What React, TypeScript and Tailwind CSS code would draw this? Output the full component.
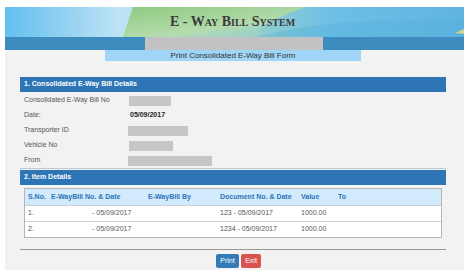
const rows = [
  { sno: '1.', ewb: '- 05/09/2017', by: '', doc: '123 - 05/09/2017', value: '1000.00', to: '' },
  { sno: '2.', ewb: '- 05/09/2017', by: '', doc: '1234 - 05/09/2017', value: '1000.00', to: '' },
]

function Banner() {
  return (
    <div className="relative h-[30px] overflow-hidden">
      <svg className="absolute inset-0 h-full w-full" viewBox="0 0 459 30" preserveAspectRatio="none">
        <defs>
          <linearGradient id="sky" x1="0" x2="1" y1="0" y2="0">
            <stop offset="0" stopColor="#62bfee" />
            <stop offset="0.25" stopColor="#bfe3f5" />
            <stop offset="0.5" stopColor="#9fd3c0" />
            <stop offset="0.7" stopColor="#6fc0e6" />
            <stop offset="1" stopColor="#5fb4df" />
          </linearGradient>
          <linearGradient id="green" x1="0" x2="1" y1="0" y2="1">
            <stop offset="0" stopColor="#86c66c" />
            <stop offset="0.6" stopColor="#b6dca6" />
            <stop offset="1" stopColor="#8ccbe8" stopOpacity="0.2" />
          </linearGradient>
        </defs>
        <rect width="459" height="30" fill="url(#sky)" />
        <path d="M118 30 L128 0 L300 0 C270 12 240 22 260 30 Z" fill="url(#green)" opacity="0.85" />
        <path d="M70 0 L77 30" stroke="#a7cfe4" strokeWidth="0.8" />
        <path d="M250 30 C300 18 360 10 459 14 L459 30 Z" fill="#4fb0da" opacity="0.35" />
        <path d="M450 26 L459 22 L459 27 Z" fill="#d9d08a" />
      </svg>
      <div className="relative flex h-full items-center justify-center pb-[2px] pr-[4px]">
        <span className="text-[14px] font-bold text-[#3a3a3a] [font-family:'Liberation_Serif',serif] [font-variant:small-caps]">
          E - Way Bill System
        </span>
      </div>
    </div>
  )
}

function SectionHeader({ title }: { title: string }) {
  return (
    <div className="flex h-[15px] items-center bg-[#2e75b6] px-[4px] text-[7px] font-bold text-white">
      {title}
    </div>
  )
}

function DetailRow({ label, children }: { label: string; children: React.ReactNode }) {
  return (
    <div className="flex h-[15px] items-center px-[4px]">
      <span className="w-[104px] shrink-0 text-[#555]">{label}</span>
      {children}
    </div>
  )
}

function Blank({ w }: { w: string }) {
  return <div className={`h-[10px] bg-[#c6c6c6] ${w}`} />
}

export default function App() {
  return (
    <div className="min-h-[274px] bg-white pt-[7px] text-[7px] [font-family:'Liberation_Sans',Arial,sans-serif]">
      <div className="mx-[5px] w-[459px]">
        <Banner />
        <div className="flex h-[13px] bg-[#3d8bbf]">
          <div className="w-[140px]" />
          <div className="w-[178px] bg-[#c2c2c2]" />
        </div>
        <div className="bg-[#f2f2f2] pb-[1px]">
          <div className="ml-[100px] flex h-[11px] w-[256px] items-center justify-center bg-[#9fd5f7] text-[8px] text-[#333]">
            Print Consolidated E-Way Bill Form
          </div>

          <div className="ml-[15px] mr-[18px] mt-[16px]">
            <SectionHeader title="1. Consolidated E-Way Bill Details" />
            <div className="border-b border-[#b9c9d8] pt-px">
              <DetailRow label="Consolidated E-Way Bill No">
                <div className="ml-px"><Blank w="w-[42px]" /></div>
              </DetailRow>
              <DetailRow label="Date:">
                <span className="ml-[2px] font-bold text-[#222]">05/09/2017</span>
              </DetailRow>
              <DetailRow label="Transporter ID">
                <Blank w="w-[60px]" />
              </DetailRow>
              <DetailRow label="Vehicle No">
                <div className="ml-px"><Blank w="w-[44px]" /></div>
              </DetailRow>
              <DetailRow label="From">
                <Blank w="w-[84px]" />
              </DetailRow>
            </div>

            <div className="mt-px">
              <SectionHeader title="2. Item Details" />
            </div>
            <div className="mx-[4px] mt-[3px] border border-[#b5b5b5] bg-white">
              <table className="w-full table-fixed border-collapse text-left">
                <thead>
                  <tr className="h-[16px] bg-[#d2ebfc] font-bold text-[#2d73b8]">
                    <th className="w-[26px] pl-[3px] font-bold">S.No.</th>
                    <th className="w-[97px] font-bold">E-WayBill No. &amp; Date</th>
                    <th className="w-[72px] font-bold">E-WayBill By</th>
                    <th className="w-[81px] font-bold">Document No. &amp; Date</th>
                    <th className="w-[37px] font-bold">Value</th>
                    <th className="font-bold">To</th>
                  </tr>
                </thead>
                <tbody className="text-[#555]">
                  {rows.map((r) => (
                    <tr key={r.sno} className="h-[16px] border-t border-[#cfcfcf]">
                      <td className="pl-[3px]">{r.sno}</td>
                      <td className="pl-[41px]">{r.ewb}</td>
                      <td>{r.by}</td>
                      <td>{r.doc}</td>
                      <td>{r.value}</td>
                      <td>{r.to}</td>
                    </tr>
                  ))}
                </tbody>
              </table>
            </div>

            <div className="mt-[11px] border-t border-[#9a9a9a]" />
            <div className="flex justify-center gap-[2px] pt-[4px] pl-[11px] pb-[1px]">
              <button className="h-[14px] w-[23px] rounded-[2px] bg-[#337ab7] text-[7px] text-white">
                Print
              </button>
              <button className="h-[14px] w-[20px] rounded-[2px] bg-[#d9534f] text-[7px] text-white">
                Exit
              </button>
            </div>
          </div>
        </div>
      </div>
    </div>
  )
}
